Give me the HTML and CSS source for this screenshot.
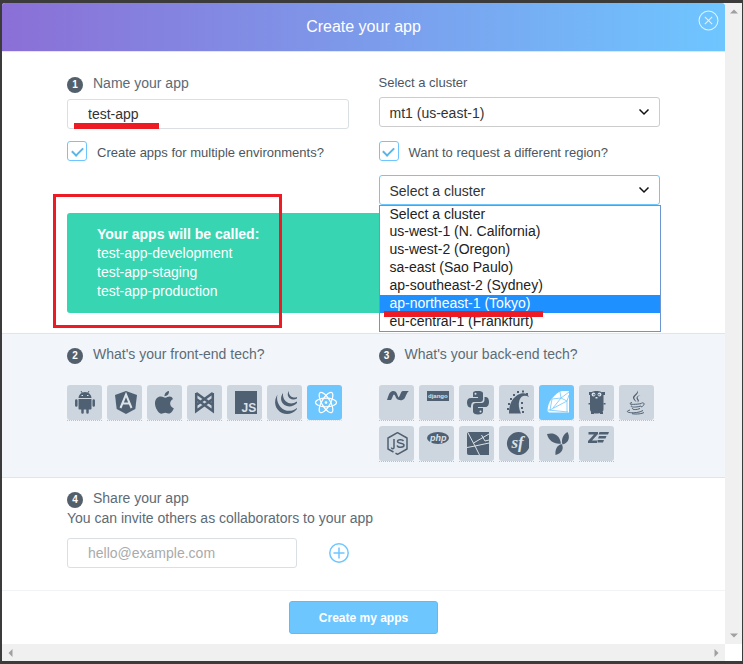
FILE: index.html
```html
<!DOCTYPE html>
<html lang="en">
<head>
<meta charset="utf-8">
<title>Create your app</title>
<link rel="stylesheet" href="styles.css">
</head>
<body>
<div class="viewport">
  <main class="dialog">
    <header class="dialog-header">
      <h1>Create your app</h1>
      <button class="close" type="button" aria-label="Close">
        <svg viewBox="0 0 20 20"><circle cx="10" cy="10" r="9"/><path d="M6.500 6.500l7 7M13.500 6.500l-7 7"/></svg>
      </button>
    </header>

    <form>
      <section class="section naming">
        <div class="columns">
          <div class="field">
            <label class="step" for="app-name"><span class="badge">1</span>Name your app</label>
            <div class="marked"><input class="text-input" id="app-name" type="text" value="test-app"><span class="mark mark-name"></span></div>
          </div>
          <div class="field field-select">
            <label class="plain-label" for="cluster">Select a cluster</label>
            <div class="select-wrap">
              <select id="cluster"><option>mt1 (us-east-1)</option></select>
              <svg class="chevron" viewBox="0 0 12 8"><path d="M1.500 1.500L6 6L10.500 1.500"/></svg>
            </div>
          </div>
          <label class="check"><input type="checkbox" checked><span>Create apps for multiple environments?</span></label>
          <label class="check"><input type="checkbox" checked><span>Want to request a different region?</span></label>
        </div>
        <div class="columns region-row">
          <div class="select-wrap region">
            <select id="region" class="focused" aria-label="Region"><option>Select a cluster</option></select>
            <svg class="chevron" viewBox="0 0 12 8"><path d="M1.500 1.500L6 6L10.500 1.500"/></svg>
            <ul class="options" role="listbox" aria-label="Region options">
              <li role="option">Select a cluster</li>
              <li role="option">us-west-1 (N. California)</li>
              <li role="option">us-west-2 (Oregon)</li>
              <li role="option">sa-east (Sao Paulo)</li>
              <li role="option">ap-southeast-2 (Sydney)</li>
              <li role="option" class="active" aria-selected="true">ap-northeast-1 (Tokyo)<span class="mark mark-option"></span></li>
              <li role="option">eu-central-1 (Frankfurt)</li>
            </ul>
          </div>
        </div>
        <div class="notice">
          <strong>Your apps will be called:</strong>
          <span>test-app-development</span>
          <span>test-app-staging</span>
          <span>test-app-production</span>
          <div class="frame"></div>
        </div>
      </section>

      <section class="section tech">
        <div class="columns">
          <div>
            <h2 class="step"><span class="badge">2</span>What's your front-end tech?</h2>
            <div class="tiles">
              <button class="tile" type="button" aria-label="Android"><svg viewBox="0 0 35 35"><path d="M11.500 13a6.500 6 0 0 1 13 0zM11.500 14h13v9.500a1 1 0 0 1-1 1h-11a1 1 0 0 1-1-1z"/><path class="line w3" stroke-linecap="round" d="M9.300 15.500v5M26.700 15.500v5M15.500 24v3.500M20.500 24v3.500"/><path class="line w1" d="M14 6l1.500 2.500M22 6l-1.500 2.500"/><path class="cut" d="M14.500 10h1.500v1h-1.500zM20 10h1.500v1H20z"/></svg></button>
              <button class="tile" type="button" aria-label="Angular"><svg viewBox="0 0 35 35"><path d="M19 6l11 4-1.700 14L19 29l-9.300-5L8 10z"/><path class="cutline w2" d="M13.500 23L19 9.500 24.500 23M15.500 18.500h7"/></svg></button>
              <button class="tile" type="button" aria-label="Apple"><svg viewBox="0 0 35 35"><path d="M22 6c.3 3-1.800 5.200-4.500 5.200C17.300 8.800 19.400 6.300 22 6zM26 14c-4.200 2.500-3.500 7.500.8 9.200-.8 2.200-2.300 4.600-4.200 5.300-1.700.3-2.600-.8-4.300-.8s-2.500 1-4 1c-2.500 0-6.300-5.500-6.300-10.200 0-4.300 2.700-6.900 5.800-6.900 1.800 0 3 1.100 4.500 1.100 1.400 0 2.600-1.200 4.500-1.200 1.200 0 2.600.8 3.200 2.500z"/></svg></button>
              <button class="tile" type="button" aria-label="Backbone"><svg viewBox="0 0 35 35"><path class="line w3" d="M9.200 8v18L25.800 14M25.800 8v18L9.200 14M9.200 8l16.600 12M25.800 8L9.200 20"/></svg></button>
              <button class="tile" type="button" aria-label="JavaScript"><svg viewBox="0 0 35 35"><path d="M8 6h22v23H8z"/><text class="cut" x="14.500" y="27" font-size="12" font-weight="bold">JS</text></svg></button>
              <button class="tile" type="button" aria-label="jQuery"><svg viewBox="0 0 35 35"><path d="M10.500 9.500c-4.500 7-2.500 15 4.500 18.500 5 2 11 1 15-4v-1c-5 4-12 3.800-16-.5-3-3.300-4.800-8-3.500-13z"/><path d="M16 8c-3 4-2.500 9.300 1.500 12 4 2.500 9 1.500 12.500-2v-1.500c-4 2.500-8 2.500-11 0-2.500-2.200-3.300-5-3-8.500z"/><path d="M22 6c-2 2.500-1.500 5.500 1 7.500 2 1.400 4.500 1.500 7 0V12c-2.500 1-5 .5-6.500-1S21.700 8 22 6z"/></svg></button>
              <button class="tile selected" type="button" aria-label="React" aria-pressed="true"><svg viewBox="0 0 35 35"><g fill="none" stroke="#fff" stroke-width="1.200"><ellipse cx="19" cy="17.500" rx="10.500" ry="4.300"/><ellipse cx="19" cy="17.500" rx="11.500" ry="4.300" transform="rotate(60 19 17.500)"/><ellipse cx="19" cy="17.500" rx="11.500" ry="4.300" transform="rotate(120 19 17.500)"/></g><circle cx="19" cy="17.500" r="1.300" fill="#fff"/></svg></button>
            </div>
          </div>
          <div>
            <h2 class="step"><span class="badge">3</span>What's your back-end tech?</h2>
            <div class="tiles">
              <button class="tile" type="button" aria-label=".NET"><svg viewBox="0 0 35 35"><path d="M8 15c1.500-4 2-8 5-8.800 4.500-1 5 2.800 6.500 6.300C21.500 11 21.500 6 24 6h6c-2 1-3 5-4.500 7.500-2.500 3-6.500 1.500-8 0-1-1.300-1.500-4-2.500-4S13.500 13 12 15z"/></svg></button>
              <button class="tile" type="button" aria-label="Django"><svg viewBox="0 0 35 35"><path d="M8 6h22v10H8z"/><text class="cut" x="9" y="12.800" font-size="6" font-weight="bold">django</text></svg></button>
              <button class="tile" type="button" aria-label="Python"><svg viewBox="0 0 35 35"><path d="M14 12V8c0-1.500 1.500-2 4.500-2S24 6.500 24 8.500V14c0 2-1 3-3 3h-5.500c-2.500 0-3.500 1.500-3.500 5.500h-1C9 22.500 8 20 8 17.500S9 13 12 13h7v-1z"/><path d="M25.500 12H27c2 0 3 2.500 3 5s-1 5-3.500 5H19v1h5v3.500c0 2-2 3-5 3s-5-1-5-3V21c0-2 1-3 3-3h5.500c2 0 3-1.500 3-3.500z"/><circle class="cut" cx="16.500" cy="8.700" r="1"/><circle class="cut" cx="21.500" cy="26.500" r="1"/></svg></button>
              <button class="tile" type="button" aria-label="Rails"><svg viewBox="0 0 35 35"><path d="M10 28.500c0-9 3-17 12-20 4-1 7 .5 8 3.500-4-2.500-8-1.500-9.500 3-1.500 4.500-.5 9 1.500 13.500z"/><path d="M8 23h2v2H8zM9 18h2v2H9zM11 13h2v2h-2zM14 9h2v2h-2zM18 6h2v2h-2zM23 5.500h2v2h-2zM27 8h2v2h-2zM22 17h2v2h-2zM22 22h2v2h-2zM23 26h2v2h-2z"/></svg></button>
              <button class="tile selected" type="button" aria-label="Ruby" aria-pressed="true"><svg viewBox="0 0 35 35"><path fill="#fff" d="M30 6v21.500H10L8.500 26c0-5 1.500-9 4.500-12.500C16 10 19 7 23 6z"/><path fill="none" stroke="#6ec6ff" stroke-width=".8" d="M13 14l9-1 8-6M22 13l-1-6M22 13l6 3 2-6M28 16l-17 9 2-11M22 13l-8 10M28 16v11M9 25l20 2"/></svg></button>
              <button class="tile" type="button" aria-label="Go"><svg viewBox="0 0 35 35"><path d="M11 10c0-3 3-4 6.500-4s7 1 7 4v14c0 3.500-3 4.500-7 4.500s-6.500-1.500-6.500-4.500z"/><path d="M10 7h3v3h-3zM23 7h3v3h-3zM9.500 18h2v1.500h-2zM24.500 18h2v1.500h-2zM12 27h3v2h-3zM21 27h3v2h-3z"/><circle class="cut" cx="14.500" cy="9.500" r="1.900"/><circle class="cut" cx="20.500" cy="9.500" r="1.900"/><circle cx="15" cy="9.700" r=".8"/><circle cx="20" cy="9.700" r=".8"/><path class="cut" d="M16.500 12h2v1.500h-2z"/></svg></button>
              <button class="tile" type="button" aria-label="Java"><svg viewBox="0 0 35 35"><path d="M18.500 5.500c2.500 4-5.500 5.500-2.500 9l1.500 2.500c-3-2-5-4.500-2-7 2-1.700 3-2.500 3-4.500zM21.500 10c-3 1.500-3.500 2.500-2 4.500 1 1.500 0 2-1 3 .5-1.500.3-2-.5-3-1.300-2 .5-4 3.500-4.500z"/><path class="line w1" d="M13 17.500c-6 2 2 2.500 9.500 1M12.500 20.500c-2 2 5 2 9.500.5M13.500 23c-1 2 4.500 2 7.500.5M22.500 18c4-1 3 3-.5 4M11 25c-9 2.500 7 4.500 13 .5M13 28.700c5 .8 10 0 12-1.200"/></svg></button>
              <button class="tile" type="button" aria-label="Node.js"><svg viewBox="0 0 35 35"><path class="line w15" stroke-linejoin="round" d="M14.500 26L9 23V12l9.500-5.300L28 12v11l-9.500 5.300-2-1.200M15 13v8.500c0 1.800-2.500 1.800-2.500 0M24.500 15c-1-1.700-6-1.500-6 .5 0 2.500 6.500 1 6.500 3.800 0 2.500-6.500 2.500-6.800 0"/></svg></button>
              <button class="tile" type="button" aria-label="PHP"><svg viewBox="0 0 35 35"><ellipse cx="19" cy="12" rx="11" ry="6"/><text class="cut" x="11" y="14.500" font-size="9" font-weight="bold" font-style="italic">php</text></svg></button>
              <button class="tile" type="button" aria-label="Laravel"><svg viewBox="0 0 35 35"><path d="M8 6h22v23H10c-1.500 0-2-1-2-2z"/><path class="cutline w1" d="M8.500 6l7.500 14 14-3M8 21.500l8-1.500 4.500 9M14.500 17L30 8M22.500 9l3.500 6 4-1"/></svg></button>
              <button class="tile" type="button" aria-label="Symfony"><svg viewBox="0 0 35 35"><path d="M30 13a11.500 11.500 0 1 0 0 9z"/><text class="cut" x="12.500" y="22" font-family="Liberation Serif, serif" font-size="17" font-weight="bold" font-style="italic">sf</text></svg></button>
              <button class="tile" type="button" aria-label="Yii"><svg viewBox="0 0 35 35"><path d="M8 8c6-1.500 12.500 0 14 9.500C16 18.500 9.500 15 8 8zM28.500 6c2.800 5 1.500 11-5 12.500-1.500-5 .5-10 5-12.500zM22.500 18c3 4 .5 9.500-6 11-.5-5 1-9.500 6-11z"/></svg></button>
              <button class="tile" type="button" aria-label="Zend Framework"><svg viewBox="0 0 35 35"><path d="M9.500 6H19v2l-6 6.500h5V17H9v-2l6-6.500H9.500zM20.500 6H30l-1 2.500h-9.500zM20 10h7.500l-1 2.500H19zM18.500 14H25l-1 2.500h-5.500z"/></svg></button>
            </div>
          </div>
        </div>
      </section>

      <section class="section share">
        <label class="step" for="email"><span class="badge">4</span>Share your app</label>
        <p>You can invite others as collaborators to your app</p>
        <div class="invite">
          <input class="text-input" id="email" type="email" placeholder="hello@example.com">
          <button class="add" type="button" aria-label="Add collaborator"><svg viewBox="0 0 20 20"><circle cx="10" cy="10" r="9.200"/><path d="M10 4.500v11M4.500 10h11"/></svg></button>
        </div>
      </section>

      <footer><button class="submit" type="submit">Create my apps</button></footer>
    </form>
  </main>
  <div class="scroll scroll-y">
    <svg viewBox="0 0 8 5"><path d="M0 4.500h8L4 .5z"/></svg>
    <svg viewBox="0 0 8 5"><path d="M0 .5h8L4 4.500z"/></svg>
  </div>
  <div class="scroll scroll-x">
    <svg viewBox="0 0 5 8"><path d="M4.500 0v8L.5 4z"/></svg>
    <svg viewBox="0 0 5 8"><path d="M.5 0v8l4-4z"/></svg>
  </div>
</div>
</body>
</html>
```
FILE: styles.css
```css
* { box-sizing: border-box; }

body {
  margin: 0;
  min-height: 100vh;
  padding: 3px 1px 3px 2px;
  background: #3b3b3b;
  font-family: "Liberation Sans", Arial, sans-serif;
  font-size: 14px;
  color: #5c6b76;
}

button, input, select { font: inherit; margin: 0; }
button { padding: 0; border: 0; background: none; }
svg { display: block; }
h1, h2, p, ul { margin: 0; padding: 0; font-weight: normal; }

.viewport {
  display: grid;
  grid-template-columns: minmax(0, 1fr) 17px;
  grid-template-rows: auto 17px;
  background: #fff;
  border-radius: 3px 0 0 0;
}

.dialog-header {
  position: relative;
  display: flex;
  align-items: center;
  justify-content: center;
  height: 48px;
  background: linear-gradient(to right, #8b6fd6, #6ec6ff);
  border-radius: 3px 3px 0 0;
  color: #fff;
}
.dialog-header h1 { font-size: 16px; }
.close { position: absolute; top: 7px; right: 6px; }
.close svg { width: 21px; height: 21px; fill: none; stroke: #dff2ff; stroke-width: 1; }

.section { padding: 10px 65px; }
.columns { display: grid; grid-template-columns: 1fr 1fr; column-gap: 30px; row-gap: 12px; }
.naming { padding: 21px 65px 20px; border-top: 1px solid #dfe7ee; }

.field { display: flex; flex-direction: column; gap: 6px; }
.field-select { gap: 4px; }

.step { display: flex; align-items: center; gap: 10px; height: 20px; font-size: 14px; line-height: 20px; }
.badge {
  align-self: flex-end;
  width: 16px;
  height: 16px;
  border-radius: 8px;
  background: #53606b;
  color: #fff;
  font-size: 10px;
  font-weight: bold;
  line-height: 16px;
  text-align: center;
}
.plain-label { height: 20px; font-size: 13px; line-height: 20px; color: #4d565e; }

.text-input {
  display: block;
  width: 100%;
  height: 30px;
  padding: 0 20px;
  border: 1px solid #d9dfe2;
  border-radius: 3px;
  background: #fff;
  color: #333;
}
.text-input::placeholder { color: #aaa; }

.marked, .select-wrap, .notice, .active { position: relative; }
.mark { position: absolute; height: 6px; background: #ed1c24; }
.mark-name { left: 7px; bottom: 0; width: 85px; }
.mark-option { left: 4px; bottom: -4px; width: 159px; z-index: 1; }

select {
  display: block;
  width: 100%;
  height: 30px;
  padding: 2px 10px 0;
  appearance: none;
  border: 1px solid #ccc;
  border-radius: 3px;
  background: #fff;
  color: #333;
}
select.focused { border-color: #6ec6ff; }
.chevron {
  position: absolute;
  top: 11px;
  right: 10px;
  width: 12px;
  height: 8px;
  fill: none;
  stroke: #111;
  stroke-width: 1.5;
  pointer-events: none;
}

.check { display: flex; align-items: center; gap: 10px; height: 20px; font-size: 13px; color: #4d565e; }
.check span { padding-top: 3px; line-height: 20px; }
.check input {
  width: 20px;
  height: 20px;
  appearance: none;
  border: 1px solid #6ec6ff;
  border-radius: 3px;
  display: grid;
  place-items: center;
}
.check input:checked::before {
  content: "";
  width: 9px;
  height: 5px;
  border: solid #5ab5ea;
  border-width: 0 0 2px 2px;
  transform: translateY(-1px) rotate(-45deg);
}

.region-row { margin: 14px 0 8px; }
.region { grid-column: 2; }
.options {
  position: absolute;
  top: 30px;
  left: 0;
  right: -1px;
  z-index: 2;
  border: 1px solid #6c96d1;
  background: #fff;
  color: #222;
  list-style: none;
}
.options li { height: 18px; padding-left: 10px; line-height: 17px; }
.options li:first-child { height: 17px; }
.options .active { background: #1e90ff; color: #fff; }

.notice {
  display: flex;
  flex-direction: column;
  padding: 12px 30px;
  border-radius: 3px;
  background: #37d5b2;
  color: #fff;
  line-height: 19px;
}
.frame { position: absolute; top: -19px; left: -14px; width: 229px; height: 134px; border: 3px solid #ed1c24; }

.tech { padding-bottom: 15px; border: solid #dde6ee; border-width: 1px 0; background: #f2f6fa; }
.tiles { display: flex; flex-wrap: wrap; gap: 5px; margin-top: 21px; }
.tile { height: 36px; border-bottom: 1px dotted #b9c1c9; }
.tile svg { width: 35px; height: 35px; border-radius: 3px; background: #cdd5de; fill: #4f6073; }
.tile.selected { border-bottom-color: #cfe0ee; }
.tile.selected svg { background: #6ec6ff; }
.tile .line { fill: none; stroke: #4f6073; }
.tile .cut { fill: #dbe2e8; }
.tile .cutline { fill: none; stroke: #dbe2e8; }
.tile .w1 { stroke-width: 1; }
.tile .w15 { stroke-width: 1.5; }
.tile .w2 { stroke-width: 2; }
.tile .w3 { stroke-width: 2.5; }

.share { padding-bottom: 22px; }
.share p { line-height: 20px; }
.invite { display: flex; align-items: center; gap: 32px; margin-top: 10px; }
.invite .text-input { width: 230px; }
.add svg { width: 20px; height: 20px; fill: none; stroke: #6ec6ff; stroke-width: 1.5; }

footer { display: flex; justify-content: center; padding: 10px; border-top: 1px solid #f2f3f4; }
.submit {
  height: 33px;
  padding: 0 29px;
  border: 1px solid #5bbcf8;
  border-radius: 3px;
  background: #6ec6ff;
  color: #fff;
  font-size: 12px;
  font-weight: bold;
}

.scroll { display: flex; align-items: center; justify-content: space-between; background: #f0f0f0; }
.scroll svg { fill: #a0a0a0; }
.scroll-y { flex-direction: column; padding: 6px 0; }
.scroll-y svg { width: 8px; height: 5px; }
.scroll-x { padding: 0 6px; }
.scroll-x svg { width: 5px; height: 8px; }
```
